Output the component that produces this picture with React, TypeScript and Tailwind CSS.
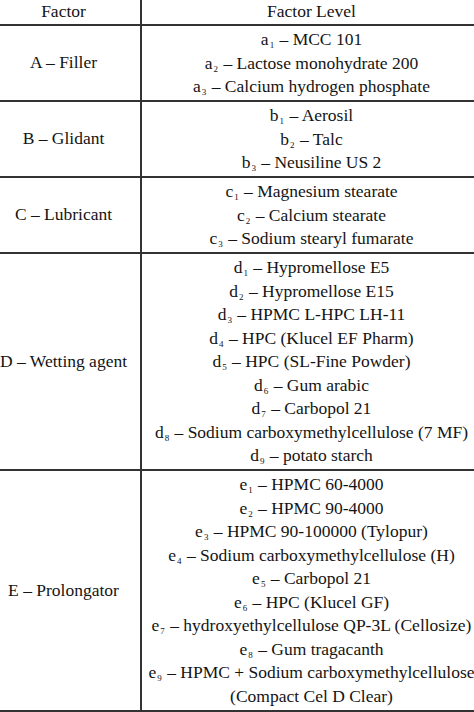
import React from "react";

type Item = { l: string; s: string; t: React.ReactNode };

const rows: { f: string; items: Item[] }[] = [
  {
    f: "A – Filler",
    items: [
      { l: "a", s: "1", t: "MCC 101" },
      { l: "a", s: "2", t: "Lactose monohydrate 200" },
      { l: "a", s: "3", t: "Calcium hydrogen phosphate" },
    ],
  },
  {
    f: "B – Glidant",
    items: [
      { l: "b", s: "1", t: "Aerosil" },
      { l: "b", s: "2", t: "Talc" },
      { l: "b", s: "3", t: "Neusiline US 2" },
    ],
  },
  {
    f: "C – Lubricant",
    items: [
      { l: "c", s: "1", t: "Magnesium stearate" },
      { l: "c", s: "2", t: "Calcium stearate" },
      { l: "c", s: "3", t: "Sodium stearyl fumarate" },
    ],
  },
  {
    f: "D – Wetting agent",
    items: [
      { l: "d", s: "1", t: "Hypromellose E5" },
      { l: "d", s: "2", t: "Hypromellose E15" },
      { l: "d", s: "3", t: "HPMC L-HPC LH-11" },
      { l: "d", s: "4", t: "HPC (Klucel EF Pharm)" },
      { l: "d", s: "5", t: "HPC (SL-Fine Powder)" },
      { l: "d", s: "6", t: "Gum arabic" },
      { l: "d", s: "7", t: "Carbopol 21" },
      { l: "d", s: "8", t: "Sodium carboxymethylcellulose (7 MF)" },
      { l: "d", s: "9", t: "potato starch" },
    ],
  },
  {
    f: "E – Prolongator",
    items: [
      { l: "e", s: "1", t: "HPMC 60-4000" },
      { l: "e", s: "2", t: "HPMC 90-4000" },
      { l: "e", s: "3", t: "HPMC 90-100000 (Tylopur)" },
      { l: "e", s: "4", t: "Sodium carboxymethylcellulose (H)" },
      { l: "e", s: "5", t: "Carbopol 21" },
      { l: "e", s: "6", t: "HPC (Klucel GF)" },
      { l: "e", s: "7", t: "hydroxyethylcellulose QP-3L (Cellosize)" },
      { l: "e", s: "8", t: "Gum tragacanth" },
      {
        l: "e",
        s: "9",
        t: (
          <>
            HPMC + Sodium carboxymethylcellulose
            <br />
            (Compact Cel D Clear)
          </>
        ),
      },
    ],
  },
];

export default function App() {
  return (
    <div
      className="w-[474px] h-[712px] overflow-hidden bg-white text-[#141414] text-[17.5px] leading-[23.5px]"
      style={{ fontFamily: '"Liberation Serif", "Times New Roman", serif' }}
    >
      <div className="ml-[-13px] w-[494px]">
        <div className="grid grid-cols-[155px_1fr] border-b-2 border-[#333]">
          <div className="h-[24px] flex items-center justify-center border-r-2 border-[#333]">
            Factor
          </div>
          <div className="h-[24px] flex items-center justify-center">Factor Level</div>
        </div>
        {rows.map((r) => (
          <div key={r.f} className="grid grid-cols-[155px_1fr] border-b-2 border-[#333]">
            <div className="flex items-center justify-center border-r-2 border-[#333] whitespace-nowrap">
              {r.f}
            </div>
            <div className="pt-[2px] pb-[1.5px] flex flex-col items-center text-center whitespace-nowrap">
              {r.items.map((it) => (
                <div key={it.l + it.s}>
                  {it.l}
                  <sub className="text-[9px] relative top-[3px] ml-[1px] mr-[1px]">{it.s}</sub>{" "}
                  – {it.t}
                </div>
              ))}
            </div>
          </div>
        ))}
      </div>
    </div>
  );
}
